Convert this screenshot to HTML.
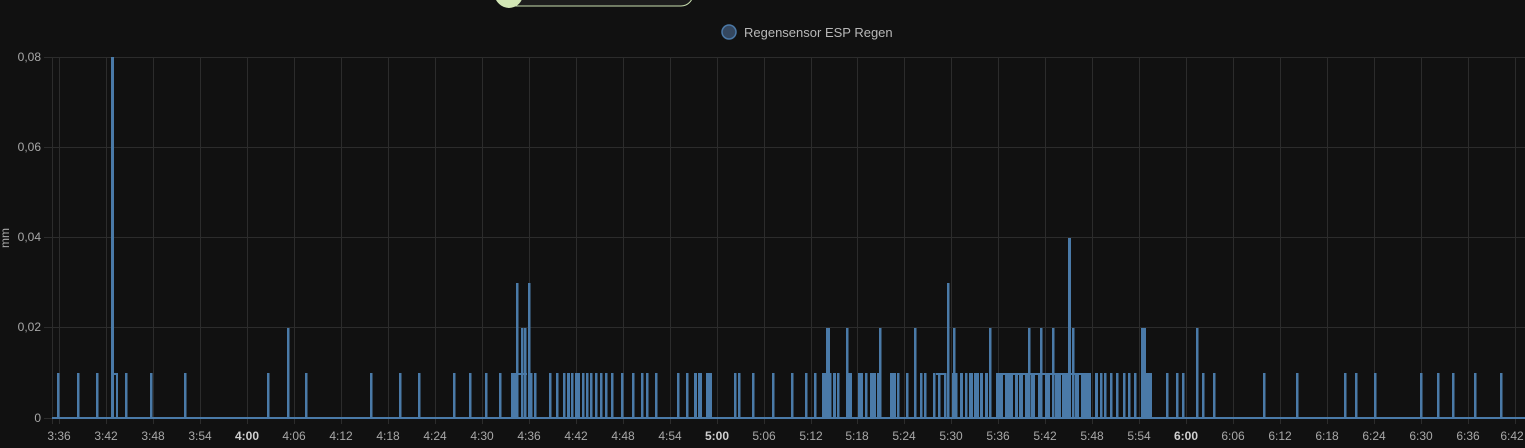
<!DOCTYPE html>
<html><head><meta charset="utf-8"><style>
html,body{margin:0;padding:0;background:#111111;width:1525px;height:448px;overflow:hidden;font-family:"Liberation Sans",sans-serif}
</style></head><body>
<svg width="1525" height="448" xmlns="http://www.w3.org/2000/svg" style="position:absolute;left:0;top:0">
<rect x="495" y="-20" width="198" height="26" rx="12" fill="#1d1d1d" stroke="#c9dfb0" stroke-width="1"/>
<circle cx="509" cy="-6" r="14" fill="#d3e7b6"/>
<circle cx="729" cy="32" r="7" fill="#34475f" stroke="#4b78a6" stroke-width="1.5"/>
<text x="744" y="37" font-size="13" fill="#b8b8b8">Regensensor ESP Regen</text>
<g stroke="#2c2c2c" stroke-width="1">
<line x1="44" y1="57.5" x2="1525" y2="57.5"/><line x1="44" y1="147.5" x2="1525" y2="147.5"/><line x1="44" y1="237.5" x2="1525" y2="237.5"/><line x1="44" y1="327.5" x2="1525" y2="327.5"/><line x1="44" y1="418.5" x2="1525" y2="418.5"/>
<line x1="52.5" y1="57" x2="52.5" y2="424"/>
</g>
<g stroke="#2c2c2c" stroke-width="1" id="v">
<line x1="59.5" y1="57" x2="59.5" y2="424"/><line x1="106.5" y1="57" x2="106.5" y2="424"/><line x1="153.5" y1="57" x2="153.5" y2="424"/><line x1="200.5" y1="57" x2="200.5" y2="424"/><line x1="247.5" y1="57" x2="247.5" y2="424"/><line x1="294.5" y1="57" x2="294.5" y2="424"/><line x1="341.5" y1="57" x2="341.5" y2="424"/><line x1="388.5" y1="57" x2="388.5" y2="424"/><line x1="435.5" y1="57" x2="435.5" y2="424"/><line x1="482.5" y1="57" x2="482.5" y2="424"/><line x1="529.5" y1="57" x2="529.5" y2="424"/><line x1="576.5" y1="57" x2="576.5" y2="424"/><line x1="623.5" y1="57" x2="623.5" y2="424"/><line x1="670.5" y1="57" x2="670.5" y2="424"/><line x1="717.5" y1="57" x2="717.5" y2="424"/><line x1="764.5" y1="57" x2="764.5" y2="424"/><line x1="811.5" y1="57" x2="811.5" y2="424"/><line x1="857.5" y1="57" x2="857.5" y2="424"/><line x1="904.5" y1="57" x2="904.5" y2="424"/><line x1="951.5" y1="57" x2="951.5" y2="424"/><line x1="998.5" y1="57" x2="998.5" y2="424"/><line x1="1045.5" y1="57" x2="1045.5" y2="424"/><line x1="1092.5" y1="57" x2="1092.5" y2="424"/><line x1="1139.5" y1="57" x2="1139.5" y2="424"/><line x1="1186.5" y1="57" x2="1186.5" y2="424"/><line x1="1233.5" y1="57" x2="1233.5" y2="424"/><line x1="1280.5" y1="57" x2="1280.5" y2="424"/><line x1="1327.5" y1="57" x2="1327.5" y2="424"/><line x1="1374.5" y1="57" x2="1374.5" y2="424"/><line x1="1421.5" y1="57" x2="1421.5" y2="424"/><line x1="1468.5" y1="57" x2="1468.5" y2="424"/><line x1="1515.5" y1="57" x2="1515.5" y2="424"/>
</g>
<g font-size="12" fill="#a8a8a8" text-anchor="end">
<text x="41" y="61">0,08</text><text x="41" y="151">0,06</text><text x="41" y="241">0,04</text><text x="41" y="331">0,02</text><text x="41" y="422">0</text>
</g>
<text x="9" y="238" font-size="12" fill="#a8a8a8" text-anchor="middle" transform="rotate(-90 9 238)">mm</text>
<g font-size="12" fill="#a8a8a8" text-anchor="middle">
<text x="59" y="440">3:36</text><text x="106" y="440">3:42</text><text x="153" y="440">3:48</text><text x="200" y="440">3:54</text><text x="247" y="440" font-weight="bold" fill="#d0d0d0">4:00</text><text x="294" y="440">4:06</text><text x="341" y="440">4:12</text><text x="388" y="440">4:18</text><text x="435" y="440">4:24</text><text x="482" y="440">4:30</text><text x="529" y="440">4:36</text><text x="576" y="440">4:42</text><text x="623" y="440">4:48</text><text x="670" y="440">4:54</text><text x="717" y="440" font-weight="bold" fill="#d0d0d0">5:00</text><text x="764" y="440">5:06</text><text x="811" y="440">5:12</text><text x="857" y="440">5:18</text><text x="904" y="440">5:24</text><text x="951" y="440">5:30</text><text x="998" y="440">5:36</text><text x="1045" y="440">5:42</text><text x="1092" y="440">5:48</text><text x="1139" y="440">5:54</text><text x="1186" y="440" font-weight="bold" fill="#d0d0d0">6:00</text><text x="1233" y="440">6:06</text><text x="1280" y="440">6:12</text><text x="1327" y="440">6:18</text><text x="1374" y="440">6:24</text><text x="1421" y="440">6:30</text><text x="1468" y="440">6:36</text><text x="1512" y="440">6:42</text>
</g>
<line x1="52" y1="418" x2="1525" y2="418" stroke="#4a7aa8" stroke-width="2"/>
<g fill="#4a7aa8">
<!-- 0.01 spikes -->
<rect x="57" y="373" width="2.5" height="45"/><rect x="77" y="373" width="2.5" height="45"/><rect x="96" y="373" width="2.5" height="45"/><rect x="114" y="373" width="4" height="2"/><rect x="116" y="373" width="2" height="45"/><rect x="125" y="373" width="2.5" height="45"/><rect x="150" y="373" width="2.5" height="45"/><rect x="184" y="373" width="2.5" height="45"/><rect x="267" y="373" width="2.5" height="45"/><rect x="305" y="373" width="2.5" height="45"/><rect x="370" y="373" width="2.5" height="45"/><rect x="399" y="373" width="2.5" height="45"/><rect x="418" y="373" width="2.5" height="45"/><rect x="453" y="373" width="2.5" height="45"/><rect x="469" y="373" width="2.5" height="45"/><rect x="485" y="373" width="2.5" height="45"/><rect x="499" y="373" width="2.5" height="45"/><rect x="511" y="373" width="6" height="45"/><rect x="517" y="373" width="10" height="2"/><rect x="530" y="373" width="2.5" height="45"/><rect x="534" y="373" width="2.5" height="45"/><rect x="549" y="373" width="2.5" height="45"/><rect x="556" y="373" width="2.5" height="45"/><rect x="563" y="373" width="2.5" height="45"/><rect x="567" y="373" width="3" height="45"/><rect x="571" y="373" width="2.5" height="45"/><rect x="575" y="373" width="5" height="45"/><rect x="582" y="373" width="2.5" height="45"/><rect x="586" y="373" width="2.5" height="45"/><rect x="590" y="373" width="2.5" height="45"/><rect x="595" y="373" width="2.5" height="45"/><rect x="600" y="373" width="2.5" height="45"/><rect x="605" y="373" width="2.5" height="45"/><rect x="611" y="373" width="2.5" height="45"/><rect x="621" y="373" width="2.5" height="45"/><rect x="632" y="373" width="2.5" height="45"/><rect x="641" y="373" width="2.5" height="45"/><rect x="646" y="373" width="2.5" height="45"/><rect x="655" y="373" width="2.5" height="45"/><rect x="677" y="373" width="2.5" height="45"/><rect x="686" y="373" width="2.5" height="45"/><rect x="694" y="373" width="3" height="45"/><rect x="698" y="373" width="4" height="45"/><rect x="706" y="373" width="6" height="45"/><rect x="734" y="373" width="2.5" height="45"/><rect x="738" y="373" width="2.5" height="45"/><rect x="752" y="373" width="2.5" height="45"/><rect x="772" y="373" width="2.5" height="45"/><rect x="791" y="373" width="2.5" height="45"/><rect x="805" y="373" width="2.5" height="45"/><rect x="814" y="373" width="2.5" height="45"/><rect x="822" y="373" width="4" height="45"/><rect x="829" y="373" width="2.5" height="45"/><rect x="833" y="373" width="3" height="45"/><rect x="837" y="373" width="2.5" height="45"/><rect x="848" y="373" width="4" height="45"/><rect x="858" y="373" width="5" height="45"/><rect x="865" y="373" width="2.5" height="45"/><rect x="870" y="373" width="6" height="45"/><rect x="877" y="373" width="3" height="45"/><rect x="890" y="373" width="6" height="45"/><rect x="897" y="373" width="2.5" height="45"/><rect x="906" y="373" width="2.5" height="45"/><rect x="920" y="373" width="2.5" height="45"/><rect x="924" y="373" width="2.5" height="45"/><rect x="933" y="373" width="2.5" height="45"/><rect x="936" y="373" width="10" height="2"/><rect x="938" y="373" width="2.5" height="45"/><rect x="944" y="373" width="2.5" height="45"/><rect x="952" y="373" width="2.5" height="45"/><rect x="955" y="373" width="2.5" height="45"/><rect x="960" y="373" width="3" height="45"/><rect x="965" y="373" width="2.5" height="45"/><rect x="969" y="373" width="4" height="45"/><rect x="974" y="373" width="5" height="45"/><rect x="980" y="373" width="3" height="45"/><rect x="985" y="373" width="3" height="45"/><rect x="996" y="373" width="4" height="45"/><rect x="1001" y="373" width="89" height="2"/><rect x="1000" y="373" width="3" height="45"/><rect x="1005" y="373" width="8" height="45"/><rect x="1015" y="373" width="3" height="45"/><rect x="1019" y="373" width="4" height="45"/><rect x="1025" y="373" width="4" height="45"/><rect x="1031" y="373" width="4" height="45"/><rect x="1038" y="373" width="3" height="45"/><rect x="1045" y="373" width="5" height="45"/><rect x="1055" y="373" width="6" height="45"/><rect x="1062" y="373" width="4" height="45"/><rect x="1066" y="373" width="2" height="45"/><rect x="1075" y="373" width="4" height="45"/><rect x="1081" y="373" width="10" height="45"/><rect x="1095" y="373" width="3" height="45"/><rect x="1100" y="373" width="2.5" height="45"/><rect x="1104" y="373" width="2.5" height="45"/><rect x="1110" y="373" width="2.5" height="45"/><rect x="1116" y="373" width="2.5" height="45"/><rect x="1123" y="373" width="2.5" height="45"/><rect x="1128" y="373" width="2.5" height="45"/><rect x="1134" y="373" width="2.5" height="45"/><rect x="1146" y="373" width="6" height="45"/><rect x="1166" y="373" width="2.5" height="45"/><rect x="1176" y="373" width="2.5" height="45"/><rect x="1182" y="373" width="2.5" height="45"/><rect x="1202" y="373" width="2.5" height="45"/><rect x="1213" y="373" width="2.5" height="45"/><rect x="1263" y="373" width="2.5" height="45"/><rect x="1296" y="373" width="2.5" height="45"/><rect x="1344" y="373" width="2.5" height="45"/><rect x="1355" y="373" width="2.5" height="45"/><rect x="1374" y="373" width="2.5" height="45"/><rect x="1420" y="373" width="2.5" height="45"/><rect x="1437" y="373" width="2.5" height="45"/><rect x="1452" y="373" width="2.5" height="45"/><rect x="1474" y="373" width="2.5" height="45"/><rect x="1500" y="373" width="2.5" height="45"/>
<!-- taller -->
<rect x="111" y="57" width="3" height="361"/>
<rect x="287" y="328" width="2.5" height="90"/>
<rect x="516" y="283" width="2.5" height="135"/><rect x="521" y="328" width="2.5" height="90"/><rect x="524" y="328" width="2.5" height="90"/><rect x="528" y="283" width="2.5" height="135"/>
<rect x="826" y="328" width="4" height="90"/><rect x="846" y="328" width="2.5" height="90"/><rect x="879" y="328" width="2.5" height="90"/><rect x="914" y="328" width="2.5" height="90"/><rect x="947" y="283" width="2.5" height="135"/><rect x="953" y="328" width="2.5" height="90"/><rect x="989" y="328" width="2.5" height="90"/>
<rect x="1028" y="328" width="2.5" height="90"/><rect x="1040" y="328" width="2.5" height="90"/><rect x="1052" y="328" width="2.5" height="90"/><rect x="1068" y="238" width="3" height="180"/><rect x="1072" y="328" width="2.5" height="90"/><rect x="1141" y="328" width="5" height="90"/><rect x="1196" y="328" width="2.5" height="90"/>
</g>
</svg>
</body></html>
